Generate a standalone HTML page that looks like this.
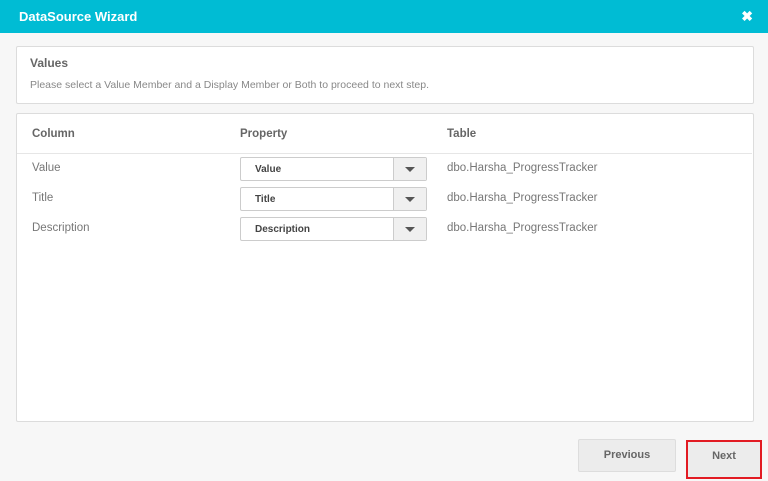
<!DOCTYPE html><html><head><style>
body{margin:0;width:768px;height:481px;background:#f7f7f7;font-family:"Liberation Sans",sans-serif;position:relative;overflow:hidden}
.hd{position:absolute;left:0;top:0;width:768px;height:33px;background:#00bcd4;color:#fff;font-weight:bold;font-size:13px}
.p{position:absolute;background:#fff;border:1px solid #dcdcdc;border-radius:2px}
.t{position:absolute;font-size:11.5px;color:#777}
.sel{position:absolute;left:240px;width:185px;height:22px;border:1px solid #ccc;border-radius:2px;background:#fff;font-size:10px;font-weight:bold;color:#444}
.sel span{position:absolute;left:14px;top:6px}
.sel i{position:absolute;right:0;top:0;width:32px;height:22px;background:#f0f0f0;border-left:1px solid #ccc}
.sel i:after{content:"";position:absolute;left:11px;top:9px;border-left:5px solid transparent;border-right:5px solid transparent;border-top:5px solid #555}
.btn{position:absolute;background:#ececec;border:1px solid #ddd;border-radius:2px;font-size:11px;font-weight:bold;color:#666;text-align:center}
</style></head><body>
<div class="hd"><span style="position:absolute;left:19px;top:9px">DataSource Wizard</span><span style="position:absolute;right:15px;top:8px;font-size:14px">✖</span></div>
<div class="p" style="left:16px;top:46px;width:736px;height:56px"></div>
<div class="t" style="left:30px;top:56px;font-size:12px;color:#666;font-weight:bold">Values</div>
<div class="t" style="left:30px;top:79px;font-size:10.5px;color:#888">Please select a Value Member and a Display Member or Both to proceed to next step.</div>
<div class="p" style="left:16px;top:113px;width:736px;height:307px"></div>
<div style="position:absolute;left:17px;top:153px;width:735px;height:1px;background:#e6e6e6"></div>
<div class="t" style="left:32px;top:128px;font-weight:bold;color:#666">Column</div>
<div class="t" style="left:240px;top:128px;font-weight:bold;color:#666">Property</div>
<div class="t" style="left:447px;top:128px;font-weight:bold;color:#666">Table</div>
<div class="t" style="left:32px;top:162px">Value</div>
<div class="t" style="left:32px;top:192px">Title</div>
<div class="t" style="left:32px;top:222px">Description</div>
<div class="sel" style="top:157px"><span>Value</span><i></i></div>
<div class="sel" style="top:187px"><span>Title</span><i></i></div>
<div class="sel" style="top:217px"><span>Description</span><i></i></div>
<div class="t" style="left:447px;top:162px">dbo.Harsha_ProgressTracker</div>
<div class="t" style="left:447px;top:192px">dbo.Harsha_ProgressTracker</div>
<div class="t" style="left:447px;top:222px">dbo.Harsha_ProgressTracker</div>
<div class="btn" style="left:578px;top:439px;width:96px;height:31px;line-height:31px">Previous</div>
<div class="btn" style="left:687px;top:441px;width:72px;height:35px;line-height:29px">Next</div>
<div style="position:absolute;left:686px;top:440px;width:72px;height:35px;border:2px solid #e21b23"></div>
</body></html>
